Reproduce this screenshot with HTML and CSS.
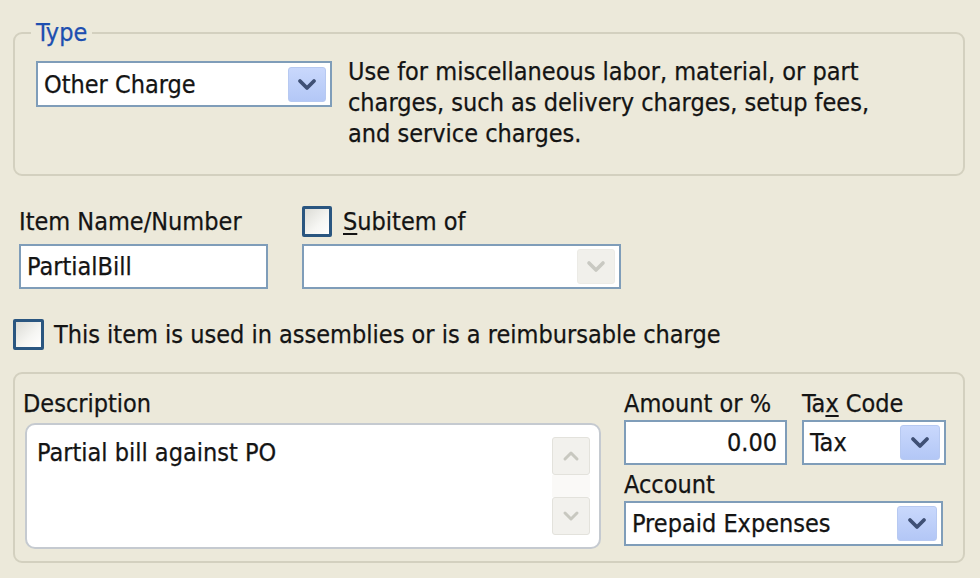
FILE: index.html
```html
<!DOCTYPE html>
<html lang="en">
<head>
    <meta charset="UTF-8">
    <title>New Item - Other Charge</title>
    <link rel="stylesheet" href="styles.css">
</head>
<body>
<div class="dialog">

    <fieldset class="group type-group">
        <legend>Type</legend>
        <div class="type-row">
            <div class="combo type-combo">
                <span class="combo-text">Other Charge</span>
                <span class="drop-btn">
                    <svg width="20" height="13" viewBox="0 0 20 13"><polyline points="3,3 10,10 17,3" fill="none" stroke="#3f5075" stroke-width="3.8" stroke-linecap="round" stroke-linejoin="round"/></svg>
                </span>
            </div>
            <p class="type-desc">Use for miscellaneous labor, material, or part<br>charges, such as delivery charges, setup fees,<br>and service charges.</p>
        </div>
    </fieldset>

    <div class="name-row">
        <div class="field-name">
            <label class="lbl">Item Name/Number</label>
            <div class="textbox">PartialBill</div>
        </div>
        <div class="field-sub">
            <div class="check-line">
                <span class="checkbox"></span>
                <label class="lbl"><u>S</u>ubitem of</label>
            </div>
            <div class="combo disabled">
                <span class="combo-text"></span>
                <span class="drop-btn">
                    <svg width="20" height="13" viewBox="0 0 20 13"><polyline points="3,3 10,10 17,3" fill="none" stroke="#c9c9c2" stroke-width="3.6" stroke-linecap="round" stroke-linejoin="round"/></svg>
                </span>
            </div>
        </div>
    </div>

    <div class="check-line assembly-row">
        <span class="checkbox"></span>
        <label class="lbl">This item is used in assemblies or is a reimbursable charge</label>
    </div>

    <fieldset class="group detail-group">
        <div class="detail-row">
            <div class="desc-col">
                <label class="lbl">Description</label>
                <div class="memo">
                    <span class="memo-text">Partial bill against PO</span>
                    <div class="scroll">
                        <span class="scroll-btn">
                            <svg width="18" height="12" viewBox="0 0 18 12"><polyline points="3,9 9,3 15,9" fill="none" stroke="#c8c8c0" stroke-width="3" stroke-linecap="round" stroke-linejoin="round"/></svg>
                        </span>
                        <span class="scroll-track"></span>
                        <span class="scroll-btn">
                            <svg width="18" height="12" viewBox="0 0 18 12"><polyline points="3,3 9,9 15,3" fill="none" stroke="#c8c8c0" stroke-width="3" stroke-linecap="round" stroke-linejoin="round"/></svg>
                        </span>
                    </div>
                </div>
            </div>
            <div class="money-col">
                <label class="lbl">Amount or %</label>
                <label class="lbl">Ta<u>x</u> Code</label>
                <div class="textbox amount">0.00</div>
                <div class="combo">
                    <span class="combo-text">Tax</span>
                    <span class="drop-btn">
                        <svg width="20" height="13" viewBox="0 0 20 13"><polyline points="3,3 10,10 17,3" fill="none" stroke="#3f5075" stroke-width="3.8" stroke-linecap="round" stroke-linejoin="round"/></svg>
                    </span>
                </div>
                <label class="lbl account-lbl">Account</label>
                <div class="combo account-combo">
                    <span class="combo-text">Prepaid Expenses</span>
                    <span class="drop-btn">
                        <svg width="20" height="13" viewBox="0 0 20 13"><polyline points="3,3 10,10 17,3" fill="none" stroke="#3f5075" stroke-width="3.8" stroke-linecap="round" stroke-linejoin="round"/></svg>
                    </span>
                </div>
            </div>
        </div>
    </fieldset>

</div>
</body>
</html>
```

FILE: styles.css
```css
html, body {
    margin: 0;
    background: #ece9da;
}

body {
    font-family: "DejaVu Sans Condensed", "Liberation Sans", sans-serif;
    font-size: 25px;
    color: #141414;
    -webkit-text-stroke: 0.25px #141414;
    overflow: hidden;
}

.dialog {
    width: 952px;
    padding: 20px 15px 0 13px;
}

.group {
    margin: 0;
    border: 2px solid #d3d0bf;
    border-radius: 9px;
    min-inline-size: 0;
}

.type-group {
    padding: 15px 16px 25px 21px;
}

.type-group legend {
    color: #1d4fb0;
    -webkit-text-stroke: 0.25px #1d4fb0;
    line-height: 26px;
    padding: 0 5px;
    margin-left: -5px;
}

.type-row {
    display: flex;
    gap: 16px;
}

.type-desc {
    margin: -5px 0 0 0;
    line-height: 31px;
}

.lbl {
    display: block;
    line-height: 31px;
    white-space: nowrap;
}

.lbl u {
    text-decoration-thickness: 2px;
    text-underline-offset: 3px;
}

/* inputs */
.combo, .textbox {
    box-sizing: border-box;
    height: 45px;
    border: 2px solid #7f9db9;
    background: #fff;
}

.textbox {
    padding: 0 6px;
    line-height: 41px;
    white-space: nowrap;
}

.combo {
    display: flex;
    align-items: center;
    padding: 0 4px 0 6px;
}

.type-combo {
    width: 296px;
    height: 46px;
    flex: none;
}

.combo-text {
    flex: 1;
    white-space: nowrap;
}

.drop-btn {
    display: flex;
    align-items: center;
    justify-content: center;
    width: 38px;
    height: 35px;
    border: 1px solid #b7c9f1;
    border-radius: 3px;
    background: linear-gradient(#c9d8fc, #b3c7f6);
    box-sizing: border-box;
}

.combo.disabled .drop-btn {
    border-color: #ecebe6;
    background: #f1f0eb;
}

/* checkboxes */
.checkbox {
    display: inline-block;
    box-sizing: border-box;
    width: 30px;
    height: 31px;
    border: 3px solid #2a5680;
    border-radius: 2px;
    background: linear-gradient(135deg, #dcdcd6, #f6f6f3 60%, #fff);
    flex: none;
}

.check-line {
    display: flex;
    align-items: center;
    gap: 11px;
}

/* item name row */
.name-row {
    display: flex;
    margin-top: 30px;
}

.field-name {
    width: 249px;
    margin-left: 6px;
}

.field-name .lbl {
    margin-bottom: 7px;
}

.field-sub {
    width: 319px;
    margin-left: 34px;
}

.field-sub .check-line {
    margin-bottom: 7px;
}

.assembly-row {
    margin-top: 30px;
    gap: 10px;
}

.assembly-row .checkbox {
    width: 31px;
}

/* description / amounts */
.detail-group {
    margin-top: 22px;
    padding: 14px 17px 12px 8px;
}

.detail-row {
    display: flex;
    gap: 23px;
}

.desc-col {
    width: 578px;
}

.memo {
    box-sizing: border-box;
    display: flex;
    align-items: flex-start;
    width: 576px;
    height: 126px;
    margin: 4px 0 0 2px;
    padding: 12px 9px 0 10px;
    border: 2px solid #c5cad0;
    border-radius: 10px;
    background: #fff;
}

.memo-text {
    flex: 1;
    line-height: 31px;
}

.scroll {
    display: flex;
    flex-direction: column;
    width: 38px;
}

.scroll-btn {
    display: flex;
    align-items: center;
    justify-content: center;
    height: 38px;
    box-sizing: border-box;
    border: 1px solid #e3e2dc;
    border-radius: 3px;
    background: #f2f1ed;
}

.scroll-track {
    height: 22px;
    background: #faf9f7;
}

.money-col {
    display: grid;
    grid-template-columns: 163px 144px;
    column-gap: 15px;
    align-content: start;
}

.money-col .textbox, .money-col .combo {
    margin-top: 1px;
}

.amount {
    text-align: right;
    padding-right: 8px;
}

.money-col .drop-btn {
    width: 40px;
}

.account-lbl {
    grid-column: 1 / 3;
    margin-top: 4px;
}

.account-combo {
    grid-column: 1 / 3;
    width: 319px;
    margin-top: 1px;
}
```
